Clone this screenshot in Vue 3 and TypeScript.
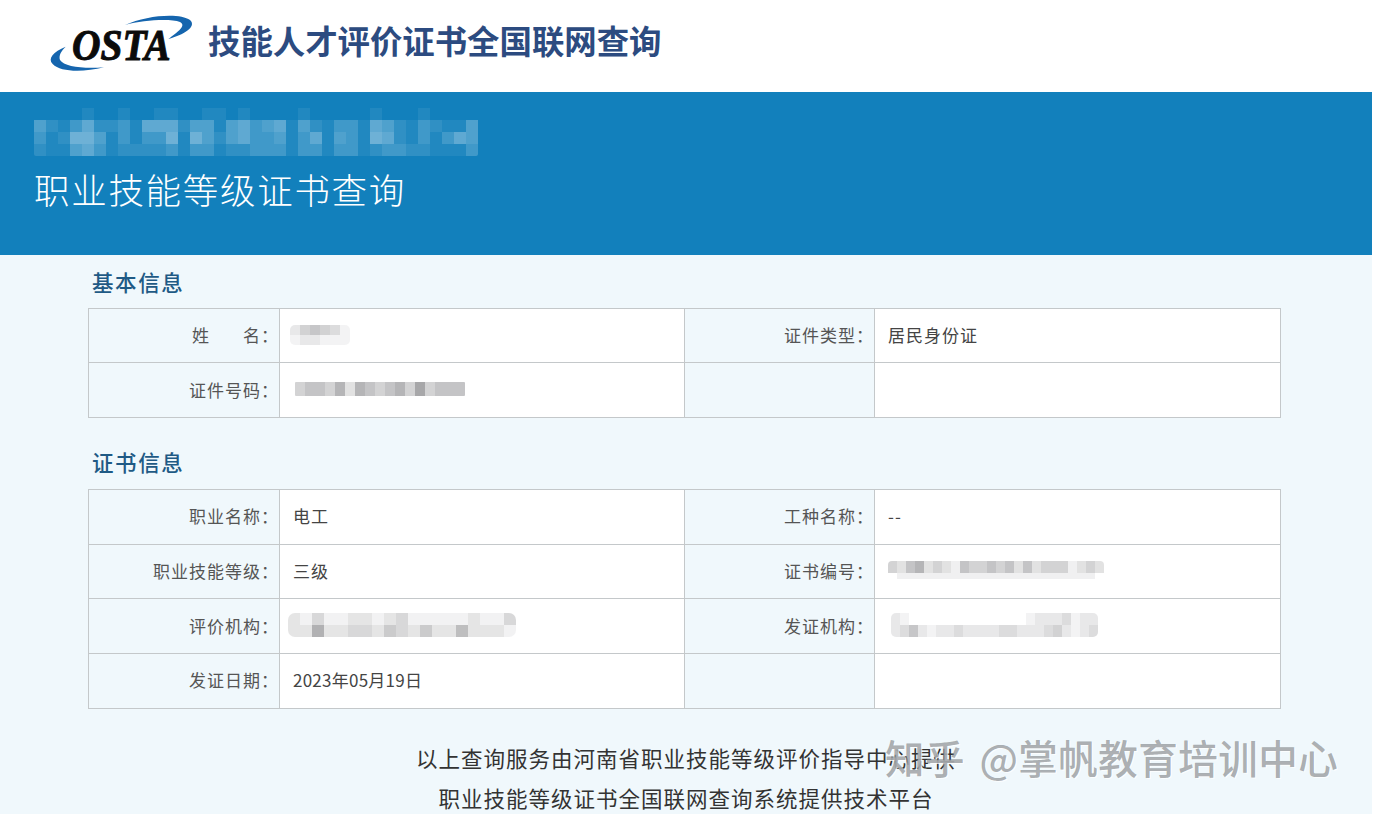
<script setup lang="ts">
interface Mosaic { rows: string[]; w: number; h: number; rgb: string; step: number; shift: number; radius: number }
interface Cell { label?: string; value?: string; mosaic?: Mosaic; date?: boolean; gapLabel?: [string, string] }

const grey = '92,92,96'
const banner: Mosaic = {
  rows: [
    '0000100100110011010000100000100010000',
    '4213522315552441453451421331542132114',
    '3126641313361642453341351431652131354',
    '2114531222231331223331331331233221113'
  ],
  w: 12, h: 12, rgb: '255,255,255', step: 0.065, shift: 0, radius: 2
}
const nameMosaic: Mosaic = { rows: ['245431', '122111'], w: 10, h: 10, rgb: grey, step: 0.07, shift: -3, radius: 5 }
const idMosaic: Mosaic = { rows: ['34435254345363444'], w: 10, h: 14, rgb: grey, step: 0.09, shift: 2, radius: 1 }
const certMosaic: Mosaic = {
  rows: ['324523214334342423331232', '324523214334342423331232', '011111111111111111111110'],
  w: 9, h: 6, rgb: grey, step: 0.09, shift: 0, radius: 4
}
const issuerMosaic: Mosaic = {
  rows: ['21000000000000012223122', '23521223222233222342123'],
  w: 9, h: 12, rgb: grey, step: 0.07, shift: 3, radius: 5
}
const evalMosaic: Mosaic = {
  rows: ['2131122123111112113', '2262233243242252221'],
  w: 12, h: 12, rgb: grey, step: 0.08, shift: -5, radius: 7
}

const basicRows: Cell[][] = [
  [{ gapLabel: ['姓', '名：'], mosaic: nameMosaic }, { label: '证件类型：', value: '居民身份证' }],
  [{ label: '证件号码：', mosaic: idMosaic }, {}]
]
const certRows: Cell[][] = [
  [{ label: '职业名称：', value: '电工' }, { label: '工种名称：', value: '--' }],
  [{ label: '职业技能等级：', value: '三级' }, { label: '证书编号：', mosaic: certMosaic }],
  [{ label: '评价机构：', mosaic: evalMosaic }, { label: '发证机构：', mosaic: issuerMosaic }],
  [{ label: '发证日期：', value: '2023年05月19日', date: true }, {}]
]
const sections = [
  { title: '基本信息', rows: basicRows, tall: false },
  { title: '证书信息', rows: certRows, tall: true }
]

function mosaicCells(m: Mosaic): string[] {
  return m.rows.join('').split('').map((d) => `rgba(${m.rgb},${Number(d) * m.step})`)
}
function mosaicStyle(m: Mosaic) {
  return {
    gridTemplateColumns: `repeat(${m.rows[0].length}, ${m.w}px)`,
    gridAutoRows: `${m.h}px`,
    marginLeft: `${m.shift}px`,
    borderRadius: `${m.radius}px`
  }
}
</script>

<template>
  <div class="page">
    <header class="brand">
      <svg class="logo" width="160" height="65" viewBox="0 0 480 195" role="img" aria-label="OSTA">
        <path fill="#1565ae" d="M255 45C320 15 420 8 450 30C472 50 430 75 385 87C415 65 440 47 420 36C390 25 310 30 255 45Z" />
        <path fill="#1565ae" d="M77 110C40 125 22 145 38 162C62 187 130 187 192 172C130 177 72 170 60 150C55 135 65 122 77 110Z" />
        <text x="96" y="150" class="logo-text" textLength="296" lengthAdjust="spacingAndGlyphs">OSTA</text>
      </svg>
      <div class="brand-name">技能人才评价证书全国联网查询</div>
    </header>

    <section class="banner">
      <div class="mosaic banner-mosaic" :style="mosaicStyle(banner)">
        <i v-for="(c, i) in mosaicCells(banner)" :key="i" :style="{ background: c }"></i>
      </div>
      <h1 class="banner-title">职业技能等级证书查询</h1>
    </section>

    <main class="content">
      <template v-for="s in sections" :key="s.title">
        <h2 class="section-title">{{ s.title }}</h2>
        <table class="info" :class="{ tall: s.tall }">
          <colgroup>
            <col class="c1" /><col class="c2" /><col class="c3" /><col class="c4" />
          </colgroup>
          <tbody>
            <tr v-for="(row, r) in s.rows" :key="r">
              <template v-for="(cell, c) in row" :key="c">
                <td class="label">
                  <template v-if="cell.gapLabel">
                    <span class="wide">{{ cell.gapLabel[0] }}</span>{{ cell.gapLabel[1] }}
                  </template>
                  <template v-else>{{ cell.label }}</template>
                </td>
                <td class="value" :class="{ date: cell.date }">
                  <div v-if="cell.mosaic" class="mosaic" :style="mosaicStyle(cell.mosaic)">
                    <i v-for="(m, i) in mosaicCells(cell.mosaic)" :key="i" :style="{ background: m }"></i>
                  </div>
                  <template v-else>{{ cell.value }}</template>
                </td>
              </template>
            </tr>
          </tbody>
        </table>
      </template>
      <footer class="foot">
        <p>以上查询服务由河南省职业技能等级评价指导中心提供</p>
        <p>职业技能等级证书全国联网查询系统提供技术平台</p>
      </footer>
    </main>

    <div class="watermark">知乎 <span class="at">@</span>掌帆教育培训中心</div>
  </div>
</template>

<style>
html, body { margin: 0; background: #fff; overflow: hidden; }
</style>

<style scoped>
.page {
  position: relative;
  width: 1372px;
  height: 814px;
  overflow: hidden;
  font-family: "Noto Sans CJK SC", "Liberation Sans", sans-serif;
}
.brand {
  height: 92px;
  display: flex;
  align-items: center;
  gap: 8px;
  padding-left: 40px;
  background: #fff;
  box-sizing: border-box;
}
.logo { flex: none; margin-top: -7px; }
.logo-text {
  font-family: "Liberation Serif", serif;
  font-style: italic;
  font-weight: 700;
  font-size: 134px;
  fill: #0b0b0b;
  stroke: #0b0b0b;
  stroke-width: 3px;
}
.brand-name {
  font-size: 32.4px;
  font-weight: 700;
  color: #2c4b80;
  white-space: nowrap;
  line-height: 44px;
  margin-top: -13px;
}
.banner {
  height: 163px;
  box-sizing: border-box;
  padding: 16px 0 0 34px;
  background: #1280bc;
}
.banner-mosaic { margin-left: 2px; filter: blur(0.8px); }
.banner-title {
  margin: 11px 0 0;
  font-size: 35.5px;
  letter-spacing: 1.7px;
  line-height: 44px;
  font-weight: 300;
  color: #fff;
}
.content {
  background: #f0f8fc;
  padding-left: 88px;
  height: 559px;
  box-sizing: border-box;
}
.section-title {
  margin: 0;
  padding-left: 4px;
  height: 53px;
  line-height: 53px;
  font-size: 21.5px;
  letter-spacing: 1.6px;
  font-weight: 500;
  color: #1f5a85;
}
.info + .section-title { margin-top: 18px; line-height: 51px; }
.info {
  width: 1192px;
  table-layout: fixed;
  border-collapse: collapse;
  font-size: 17px;
  letter-spacing: 1px;
}
.c1 { width: 191px; }
.c2 { width: 405px; }
.c3 { width: 190px; }
.c4 { width: 406px; }
.info td {
  height: 54.4px;
  padding: 0 0 2px;
  border: 1px solid #c4c8ca;
  box-sizing: border-box;
}
.info.tall td { height: 54.75px; }
.label {
  background: #f0f8fc;
  text-align: right;
  color: #555;
}
.info td.value { padding-left: 13px; }
.value {
  background: #fff;
  color: #444;
}
.date { letter-spacing: 0.25px; }
.wide { margin-right: 33px; }
.mosaic {
  display: grid;
  width: max-content;
  overflow: hidden;
  filter: blur(0.6px);
}
.mosaic i { display: block; }
.foot {
  margin-top: 29px;
  text-align: center;
  margin-left: -88px;
  font-size: 21.5px;
  letter-spacing: 1px;
  color: #333;
}
.foot p {
  margin: 0;
  line-height: 40px;
}
.watermark {
  position: absolute;
  left: 885px;
  top: 729px;
  font-size: 39.5px;
  font-weight: 500;
  line-height: 56px;
  letter-spacing: 0.5px;
  white-space: nowrap;
  color: rgba(120, 124, 128, 0.62);
  text-shadow: 1px 1px 0 rgba(255, 255, 255, 0.8);
}
.at { margin-left: 5px; }
</style>
